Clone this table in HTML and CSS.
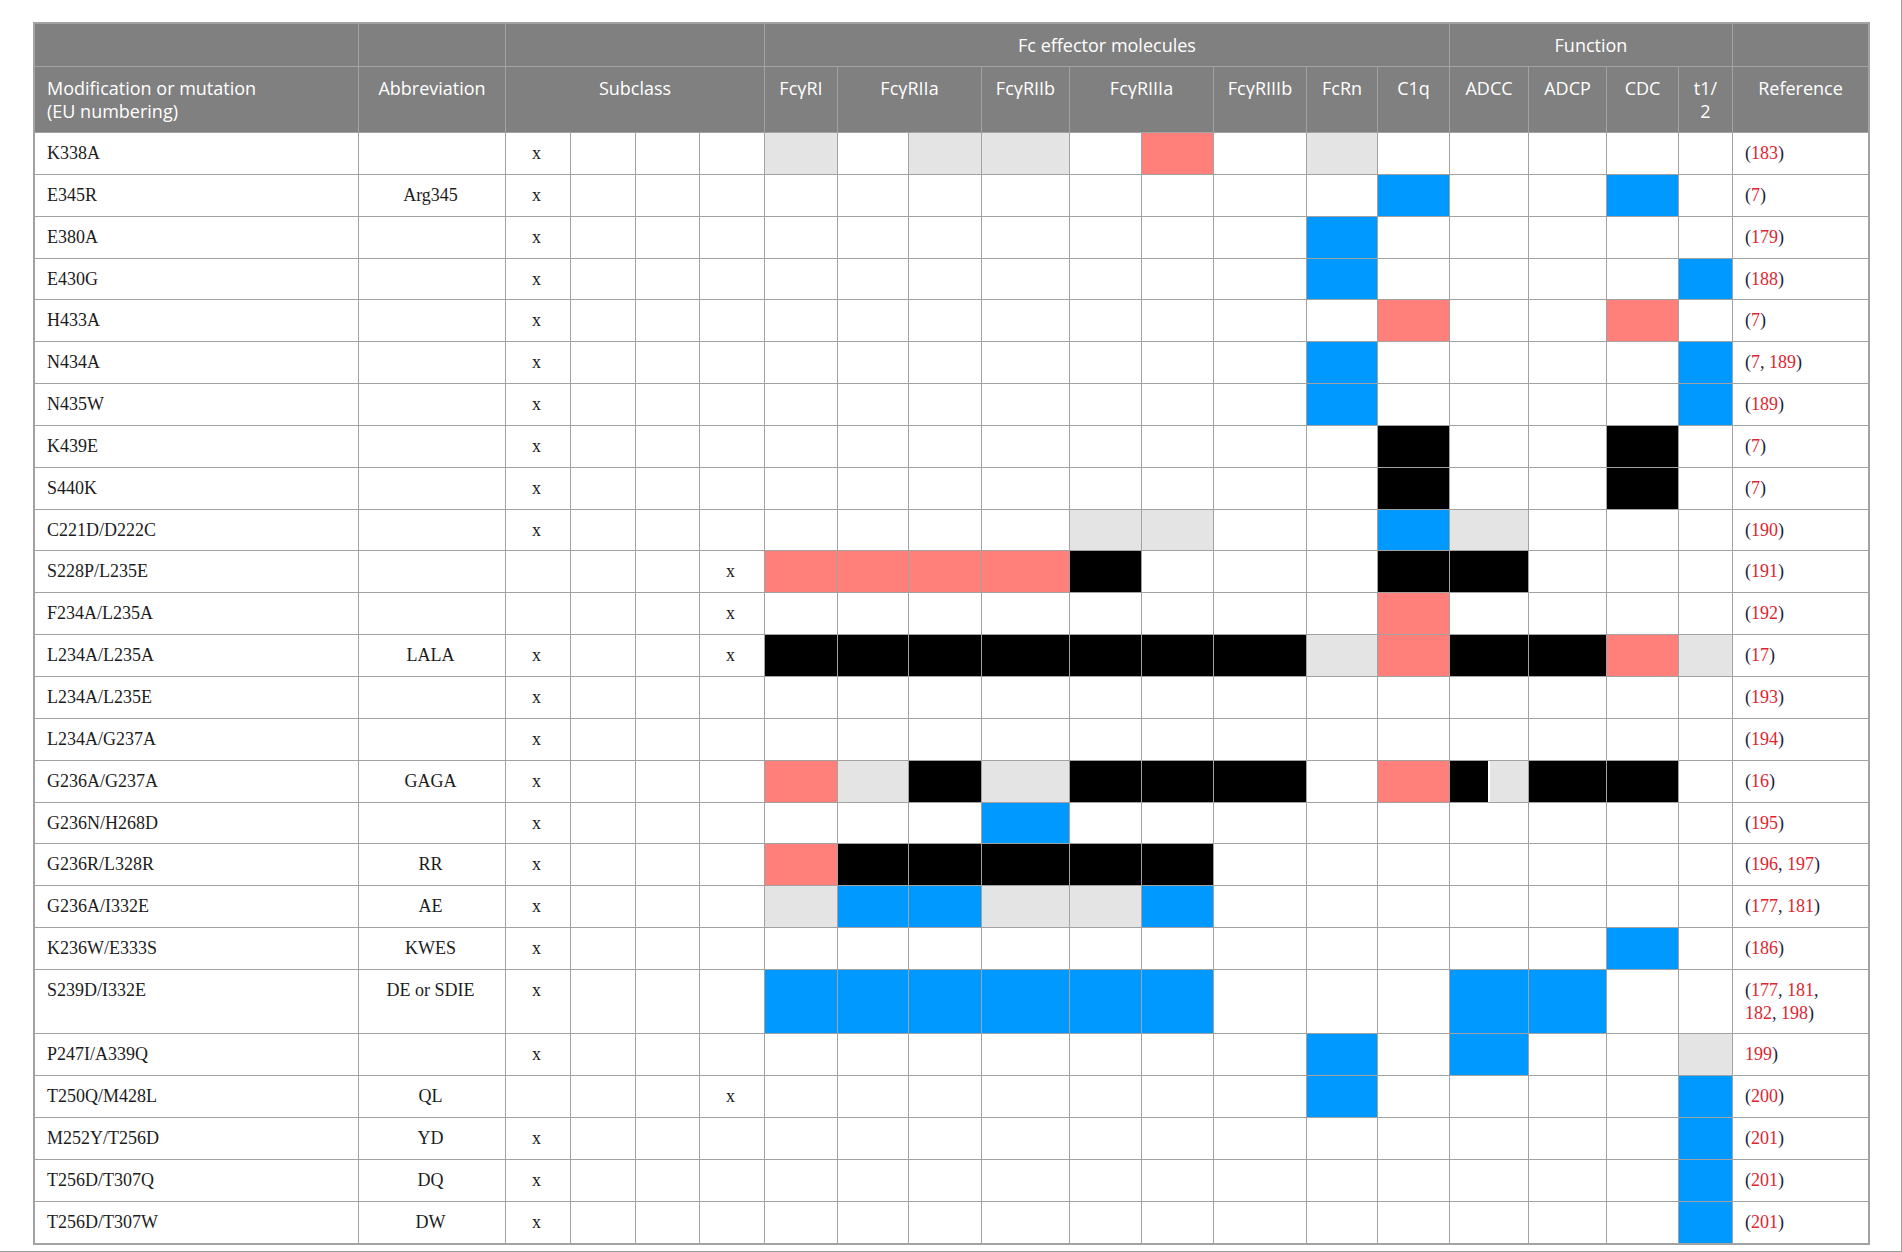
FILE: index.html
```html
<!DOCTYPE html>
<html lang="en">
<head>
<meta charset="utf-8">
<title>Fc modifications</title>
<link rel="stylesheet" href="styles.css">
</head>
<body>
<div class="page">
<div class="grid">
<div class="h"></div><div class="h"></div><div class="h s4"></div><div class="h s9">Fc effector molecules</div><div class="h s4">Function</div><div class="h"></div>
<div class="h hl">Modification or mutation<br>(EU numbering)</div><div class="h">Abbreviation</div><div class="h s4">Subclass</div><div class="h">FcγRI</div><div class="h s2">FcγRIIa</div><div class="h">FcγRIIb</div><div class="h s2">FcγRIIIa</div><div class="h">FcγRIIIb</div><div class="h">FcRn</div><div class="h">C1q</div><div class="h">ADCC</div><div class="h">ADCP</div><div class="h">CDC</div><div class="h">t1/<br>2</div><div class="h">Reference</div>

<div class="n">K338A</div><div class="a"></div><div class="x">x</div><div></div><div></div><div></div>
<div class="g"></div><div></div><div class="g"></div><div class="g"></div><div></div><div class="s"></div><div></div><div class="g"></div><div></div><div></div><div></div><div></div><div></div>
<div class="r">(<a>183</a>)</div>

<div class="n">E345R</div><div class="a">Arg345</div><div class="x">x</div><div></div><div></div><div></div>
<div></div><div></div><div></div><div></div><div></div><div></div><div></div><div></div><div class="b"></div><div></div><div></div><div class="b"></div><div></div>
<div class="r">(<a>7</a>)</div>

<div class="n">E380A</div><div class="a"></div><div class="x">x</div><div></div><div></div><div></div>
<div></div><div></div><div></div><div></div><div></div><div></div><div></div><div class="b"></div><div></div><div></div><div></div><div></div><div></div>
<div class="r">(<a>179</a>)</div>

<div class="n">E430G</div><div class="a"></div><div class="x">x</div><div></div><div></div><div></div>
<div></div><div></div><div></div><div></div><div></div><div></div><div></div><div class="b"></div><div></div><div></div><div></div><div></div><div class="b"></div>
<div class="r">(<a>188</a>)</div>

<div class="n">H433A</div><div class="a"></div><div class="x">x</div><div></div><div></div><div></div>
<div></div><div></div><div></div><div></div><div></div><div></div><div></div><div></div><div class="s"></div><div></div><div></div><div class="s"></div><div></div>
<div class="r">(<a>7</a>)</div>

<div class="n">N434A</div><div class="a"></div><div class="x">x</div><div></div><div></div><div></div>
<div></div><div></div><div></div><div></div><div></div><div></div><div></div><div class="b"></div><div></div><div></div><div></div><div></div><div class="b"></div>
<div class="r">(<a>7</a>, <a>189</a>)</div>

<div class="n">N435W</div><div class="a"></div><div class="x">x</div><div></div><div></div><div></div>
<div></div><div></div><div></div><div></div><div></div><div></div><div></div><div class="b"></div><div></div><div></div><div></div><div></div><div class="b"></div>
<div class="r">(<a>189</a>)</div>

<div class="n">K439E</div><div class="a"></div><div class="x">x</div><div></div><div></div><div></div>
<div></div><div></div><div></div><div></div><div></div><div></div><div></div><div></div><div class="k"></div><div></div><div></div><div class="k"></div><div></div>
<div class="r">(<a>7</a>)</div>

<div class="n">S440K</div><div class="a"></div><div class="x">x</div><div></div><div></div><div></div>
<div></div><div></div><div></div><div></div><div></div><div></div><div></div><div></div><div class="k"></div><div></div><div></div><div class="k"></div><div></div>
<div class="r">(<a>7</a>)</div>

<div class="n">C221D/D222C</div><div class="a"></div><div class="x">x</div><div></div><div></div><div></div>
<div></div><div></div><div></div><div></div><div class="g"></div><div class="g"></div><div></div><div></div><div class="b"></div><div class="g"></div><div></div><div></div><div></div>
<div class="r">(<a>190</a>)</div>

<div class="n">S228P/L235E</div><div class="a"></div><div></div><div></div><div></div><div class="x">x</div>
<div class="s"></div><div class="s"></div><div class="s"></div><div class="s"></div><div class="k"></div><div></div><div></div><div></div><div class="k"></div><div class="k"></div><div></div><div></div><div></div>
<div class="r">(<a>191</a>)</div>

<div class="n">F234A/L235A</div><div class="a"></div><div></div><div></div><div></div><div class="x">x</div>
<div></div><div></div><div></div><div></div><div></div><div></div><div></div><div></div><div class="s"></div><div></div><div></div><div></div><div></div>
<div class="r">(<a>192</a>)</div>

<div class="n">L234A/L235A</div><div class="a">LALA</div><div class="x">x</div><div></div><div></div><div class="x">x</div>
<div class="k"></div><div class="k"></div><div class="k"></div><div class="k"></div><div class="k"></div><div class="k"></div><div class="k"></div><div class="g"></div><div class="s"></div><div class="k"></div><div class="k"></div><div class="s"></div><div class="g"></div>
<div class="r">(<a>17</a>)</div>

<div class="n">L234A/L235E</div><div class="a"></div><div class="x">x</div><div></div><div></div><div></div>
<div></div><div></div><div></div><div></div><div></div><div></div><div></div><div></div><div></div><div></div><div></div><div></div><div></div>
<div class="r">(<a>193</a>)</div>

<div class="n">L234A/G237A</div><div class="a"></div><div class="x">x</div><div></div><div></div><div></div>
<div></div><div></div><div></div><div></div><div></div><div></div><div></div><div></div><div></div><div></div><div></div><div></div><div></div>
<div class="r">(<a>194</a>)</div>

<div class="n">G236A/G237A</div><div class="a">GAGA</div><div class="x">x</div><div></div><div></div><div></div>
<div class="s"></div><div class="g"></div><div class="k"></div><div class="g"></div><div class="k"></div><div class="k"></div><div class="k"></div><div></div><div class="s"></div><div class="kg"></div><div class="k"></div><div class="k"></div><div></div>
<div class="r">(<a>16</a>)</div>

<div class="n">G236N/H268D</div><div class="a"></div><div class="x">x</div><div></div><div></div><div></div>
<div></div><div></div><div></div><div class="b"></div><div></div><div></div><div></div><div></div><div></div><div></div><div></div><div></div><div></div>
<div class="r">(<a>195</a>)</div>

<div class="n">G236R/L328R</div><div class="a">RR</div><div class="x">x</div><div></div><div></div><div></div>
<div class="s"></div><div class="k"></div><div class="k"></div><div class="k"></div><div class="k"></div><div class="k"></div><div></div><div></div><div></div><div></div><div></div><div></div><div></div>
<div class="r">(<a>196</a>, <a>197</a>)</div>

<div class="n">G236A/I332E</div><div class="a">AE</div><div class="x">x</div><div></div><div></div><div></div>
<div class="g"></div><div class="b"></div><div class="b"></div><div class="g"></div><div class="g"></div><div class="b"></div><div></div><div></div><div></div><div></div><div></div><div></div><div></div>
<div class="r">(<a>177</a>, <a>181</a>)</div>

<div class="n">K236W/E333S</div><div class="a">KWES</div><div class="x">x</div><div></div><div></div><div></div>
<div></div><div></div><div></div><div></div><div></div><div></div><div></div><div></div><div></div><div></div><div></div><div class="b"></div><div></div>
<div class="r">(<a>186</a>)</div>

<div class="n">S239D/I332E</div><div class="a">DE or SDIE</div><div class="x">x</div><div></div><div></div><div></div>
<div class="b"></div><div class="b"></div><div class="b"></div><div class="b"></div><div class="b"></div><div class="b"></div><div></div><div></div><div></div><div class="b"></div><div class="b"></div><div></div><div></div>
<div class="r">(<a>177</a>, <a>181</a>, <a>182</a>, <a>198</a>)</div>

<div class="n">P247I/A339Q</div><div class="a"></div><div class="x">x</div><div></div><div></div><div></div>
<div></div><div></div><div></div><div></div><div></div><div></div><div></div><div class="b"></div><div></div><div class="b"></div><div></div><div></div><div class="g"></div>
<div class="r"><a>199</a>)</div>

<div class="n">T250Q/M428L</div><div class="a">QL</div><div></div><div></div><div></div><div class="x">x</div>
<div></div><div></div><div></div><div></div><div></div><div></div><div></div><div class="b"></div><div></div><div></div><div></div><div></div><div class="b"></div>
<div class="r">(<a>200</a>)</div>

<div class="n">M252Y/T256D</div><div class="a">YD</div><div class="x">x</div><div></div><div></div><div></div>
<div></div><div></div><div></div><div></div><div></div><div></div><div></div><div></div><div></div><div></div><div></div><div></div><div class="b"></div>
<div class="r">(<a>201</a>)</div>

<div class="n">T256D/T307Q</div><div class="a">DQ</div><div class="x">x</div><div></div><div></div><div></div>
<div></div><div></div><div></div><div></div><div></div><div></div><div></div><div></div><div></div><div></div><div></div><div></div><div class="b"></div>
<div class="r">(<a>201</a>)</div>

<div class="n">T256D/T307W</div><div class="a">DW</div><div class="x">x</div><div></div><div></div><div></div>
<div></div><div></div><div></div><div></div><div></div><div></div><div></div><div></div><div></div><div></div><div></div><div></div><div class="b"></div>
<div class="r">(<a>201</a>)</div>
</div>
</div>
</body>
</html>
```

FILE: styles.css
```css
html, body {
  margin: 0;
  padding: 0;
  background: #fff;
}

.page {
  box-sizing: border-box;
  width: 1902px;
  height: 1252px;
  padding: 22px 0 0 33px;
  border-right: 1px solid #9c9c9c;
  border-bottom: 1px solid #9c9c9c;
  overflow: hidden;
}

.grid {
  display: grid;
  width: max-content;
  background: #a2a2a2;
  padding: 2px;
  gap: 1px;
  grid-template-columns: 323px 146px 64px 64px 63px 64px 72px 70px 72px 87px 71px 71px 92px 70px 71px 78px 77px 71px 53px 135px;
  grid-template-rows: 42px 65px repeat(20, 40.85px) 63.3px repeat(5, 41px);
  font-family: "Liberation Serif", "Times New Roman", serif;
  font-size: 18px;
  line-height: 23px;
  color: #1c1c1c;
}

.grid > div {
  background: #fff;
  padding: 9px 13px 0 12px;
  min-width: 0;
  overflow: hidden;
}

.grid > .h {
  background: #808080;
  color: #fff;
  font-family: "Open Sans", "Noto Sans", sans-serif;
  font-size: 18px;
  line-height: 23px;
  text-align: center;
  padding: 10px 2px 0;
  white-space: nowrap;
}

.grid > .hl {
  text-align: left;
  padding-left: 12px;
}

.s2 { grid-column: span 2; }
.s4 { grid-column: span 4; }
.s9 { grid-column: span 9; }

.grid > .a,
.grid > .x {
  text-align: center;
  padding-left: 0;
  padding-right: 3px;
}

.grid > .g { background: #e4e4e4; }
.grid > .s { background: #ff7f7a; }
.grid > .b { background: #0099ff; }
.grid > .k { background: #000; }
.grid > .kg {
  background: linear-gradient(90deg, #000 0 38px, #fff 38px 40px, #e4e4e4 40px);
}

.grid > .r {
  padding-left: 12px;
  padding-right: 32px;
  color: #1c1c3c;
}

.r a {
  color: #e0252f;
  text-decoration: none;
}
```
